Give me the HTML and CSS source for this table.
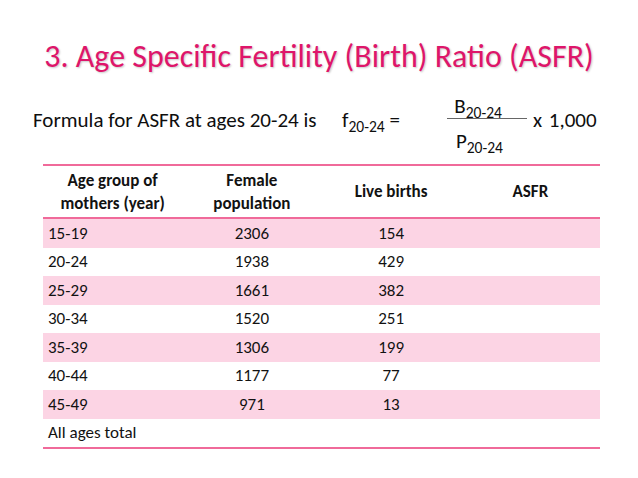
FILE: index.html
```html
<!DOCTYPE html>
<html>
<head>
<meta charset="utf-8">
<link rel="stylesheet" href="styles.css">
</head>
<body>
<div class="slide">
  <h1 class="title">3. Age Specific Fertility (Birth) Ratio (ASFR)</h1>
  <div class="formula">
    <span class="lead">Formula for ASFR at ages 20-24 is</span>
    <span class="fvar">f<sub>20-24</sub> =</span>
    <span class="frac">
      <span class="num">B<sub>20-24</sub></span>
      <span class="den">P<sub>20-24</sub></span>
    </span>
    <span class="mult">x&nbsp;1,000</span>
  </div>
  <table class="data">
    <thead>
      <tr>
        <th>Age group of<br>mothers (year)</th>
        <th>Female<br>population</th>
        <th>Live births</th>
        <th>ASFR</th>
      </tr>
    </thead>
    <tbody>
      <tr class="band"><td>15-19</td><td>2306</td><td>154</td><td></td></tr>
      <tr><td>20-24</td><td>1938</td><td>429</td><td></td></tr>
      <tr class="band"><td>25-29</td><td>1661</td><td>382</td><td></td></tr>
      <tr><td>30-34</td><td>1520</td><td>251</td><td></td></tr>
      <tr class="band"><td>35-39</td><td>1306</td><td>199</td><td></td></tr>
      <tr><td>40-44</td><td>1177</td><td>77</td><td></td></tr>
      <tr class="band"><td>45-49</td><td>971</td><td>13</td><td></td></tr>
      <tr><td>All ages total</td><td></td><td></td><td></td></tr>
    </tbody>
  </table>
</div>
</body>
</html>
```

FILE: styles.css
```css
html, body {
  margin: 0;
  padding: 0;
  background: #ffffff;
}
body {
  font-family: Carlito, Lato, "Liberation Sans", sans-serif;
  color: #121212;
}
.slide {
  width: 638px;
  height: 478px;
  overflow: hidden;
  display: flex;
  flex-direction: column;
}
.title {
  margin: 0;
  padding-top: 37px;
  height: 40px;
  font-size: 32px;
  line-height: 40px;
  font-weight: normal;
  color: #de156a;
  text-align: center;
  white-space: nowrap;
  text-shadow: 1px 1px 2px rgba(0,0,0,0.22);
}
.formula {
  display: flex;
  align-items: flex-start;
  height: 87px;
  padding-left: 33px;
  font-size: 21px;
  line-height: 24px;
  color: #0e0e0e;
}
.formula sub {
  font-size: 0.74em;
  vertical-align: -0.32em;
  line-height: 0;
}
.lead {
  width: 309px;
  margin-top: 31px;
  white-space: nowrap;
}
.fvar {
  width: 105px;
  margin-top: 31px;
  white-space: nowrap;
}
.frac {
  display: flex;
  flex-direction: column;
  align-items: flex-end;
  width: 80px;
  margin-top: 17px;
}
.num {
  width: 80px;
  box-sizing: border-box;
  padding-right: 25px;
  text-align: right;
  border-bottom: 1px solid #666;
  white-space: nowrap;
}
.den {
  padding-right: 24px;
  padding-top: 10px;
  white-space: nowrap;
}
.mult {
  margin-left: 6px;
  margin-top: 31px;
  white-space: nowrap;
  word-spacing: 2px;
}
.data {
  margin-left: 43px;
  width: 557px;
  border-collapse: collapse;
  table-layout: fixed;
  font-size: 17px;
}
.data thead tr {
  height: 53px;
  border-top: 2px solid #f06a9a;
  border-bottom: 2px solid #f06a9a;
}
.data th {
  font-weight: bold;
  text-align: center;
  line-height: 23px;
  padding: 0;
}
.data td {
  height: 28.5px;
  padding: 0;
  text-align: center;
}
.data td:first-child {
  text-align: left;
  padding-left: 5px;
}
.data tr.band td { background: #fcd4e4; }
.data tbody tr:last-child { border-bottom: 2px solid #f06a9a; }
```
